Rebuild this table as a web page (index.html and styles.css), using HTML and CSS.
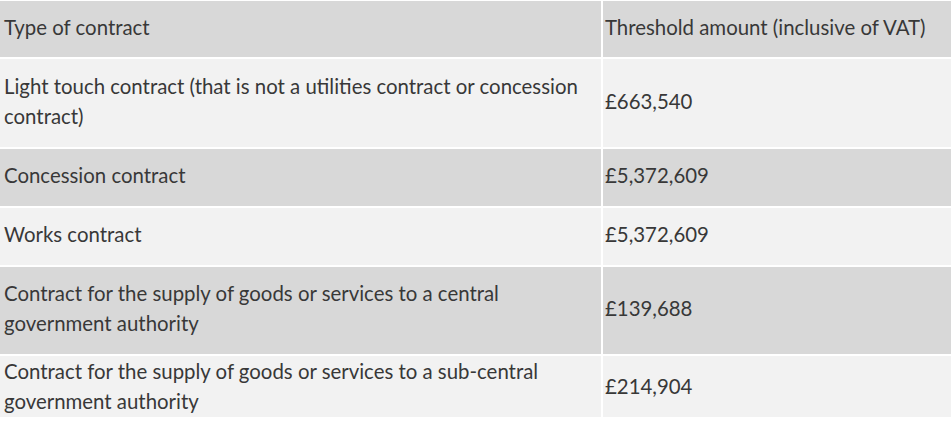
FILE: index.html
```html
<!DOCTYPE html>
<html lang="en">
<head>
<meta charset="utf-8">
<title>Thresholds</title>
<link rel="stylesheet" href="styles.css">
</head>
<body>
<table class="thresholds">
  <tr class="row dark head">
    <td class="cell first">Type of contract</td>
    <td class="cell second">Threshold amount (inclusive of VAT)</td>
  </tr>
  <tr class="row light tall">
    <td class="cell first">Light touch contract (that is not a utilities contract or concession contract)</td>
    <td class="cell second">£663,540</td>
  </tr>
  <tr class="row dark">
    <td class="cell first">Concession contract</td>
    <td class="cell second">£5,372,609</td>
  </tr>
  <tr class="row light">
    <td class="cell first">Works contract</td>
    <td class="cell second">£5,372,609</td>
  </tr>
  <tr class="row dark">
    <td class="cell first">Contract for the supply of goods or services to a central government authority</td>
    <td class="cell second">£139,688</td>
  </tr>
  <tr class="row light last">
    <td class="cell first">Contract for the supply of goods or services to a sub-central government authority</td>
    <td class="cell second">£214,904</td>
  </tr>
</table>
</body>
</html>
```
FILE: styles.css
```css
html, body {
  margin: 0;
  padding: 0;
  background: #ffffff;
}
.thresholds {
  border-collapse: separate;
  border-spacing: 2px;
  margin: -1px 0 0 -2px;
  width: 960px;
  table-layout: fixed;
  font-family: Lato, "Open Sans", sans-serif;
  font-size: 20.4px;
  line-height: 30px;
  color: #383838;
}
.cell {
  padding: 11px 3px 16px 4px;
  vertical-align: middle;
  text-align: left;
}
.head .cell {
  padding-bottom: 15px;
}
.tall .cell {
  padding-top: 12px;
}
.last .cell {
  padding-top: 0;
  padding-bottom: 1px;
}
.first {
  width: 594px;
}
.second {
  padding-left: 2px;
}
.dark .cell {
  background: #d8d8d8;
}
.light .cell {
  background: #f2f2f2;
}
```
